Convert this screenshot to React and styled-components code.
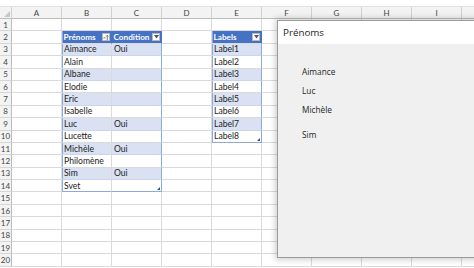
import React from 'react'
import styled, { createGlobalStyle } from 'styled-components'

const Global = createGlobalStyle`
  html, body { margin: 0; padding: 0; background: #fff; overflow: hidden; }
  body { font-family: Lato, "Liberation Sans", sans-serif; }
`

const COLS = ['A', 'B', 'C', 'D', 'E', 'F', 'G', 'H', 'I', '']
const ROW_H = 12.4

// table contents, row index (1-based) -> cells
const prenoms = ['Aimance', 'Alain', 'Albane', 'Elodie', 'Eric', 'Isabelle', 'Luc', 'Lucette', 'Michèle', 'Philomène', 'Sim', 'Svet']
const oui = { Aimance: 1, Luc: 1, 'Michèle': 1, Sim: 1 }

const Page = styled.div`
  width: 474px;
  height: 268px;
  position: relative;
  overflow: hidden;
`

const TopBand = styled.div`
  height: 7px;
  background: #fff;
  border-bottom: 1px solid #e2e2e2;
  box-sizing: border-box;
`

const Sheet = styled.div`
  display: grid;
  grid-template-columns: 12px repeat(10, 50px);
  grid-template-rows: 12px repeat(20, ${ROW_H}px);
`

const ColHead = styled.div`
  background: #f3f3f3;
  border-right: 1px solid #d0d0d0;
  border-bottom: 1px solid #bdbdbd;
  box-sizing: border-box;
  font-size: 8px;
  color: #444;
  display: flex;
  align-items: center;
  justify-content: center;
`

const Corner = styled(ColHead)`
  position: relative;
  &::after {
    content: '';
    position: absolute;
    right: 1px;
    bottom: 1px;
    border-left: 6px solid transparent;
    border-bottom: 6px solid #c8c8c8;
  }
`

const RowHead = styled.div`
  background: #f3f3f3;
  border-right: 1px solid #bdbdbd;
  border-bottom: 1px solid #d6d6d6;
  box-sizing: border-box;
  font-size: 8px;
  color: #444;
  display: flex;
  align-items: center;
  justify-content: center;
  overflow: hidden;
  white-space: nowrap;
`

const Cell = styled.div`
  position: relative;
  box-sizing: border-box;
  border-right: 1px solid ${p => (p.$kind === 'head' ? '#4472c4' : '#dadada')};
  border-bottom: 1px solid ${p => (p.$kind === 'band' ? '#c9d5ec' : p.$last ? '#8ea9db' : '#dadada')};
  background: ${p => (p.$kind === 'head' ? '#4472c4' : p.$kind === 'band' ? '#d9e1f2' : '#fff')};
  color: ${p => (p.$kind === 'head' ? '#fff' : '#222')};
  font-weight: ${p => (p.$kind === 'head' ? 700 : 400)};
  font-size: ${p => (p.$kind === 'head' ? 8.2 : 8.6)}px;
  padding-left: ${p => (p.$kind === 'head' ? 1.5 : 2)}px;
  display: flex;
  align-items: center;
  white-space: nowrap;
  ${p => p.$edge && 'border-right-color: #8ea9db;'}
  ${p => p.$left && 'box-shadow: inset 1px 0 0 #8ea9db;'}
`

const FilterBtn = styled.span`
  position: absolute;
  right: 1px;
  top: 2px;
  width: 8px;
  height: 8px;
  background: #fff;
  border: 1px solid #b9b9b9;
  box-sizing: border-box;
  display: flex;
  align-items: center;
  justify-content: center;
`

const Handle = styled.span`
  position: absolute;
  right: 1px;
  bottom: 1px;
  border-left: 3px solid transparent;
  border-bottom: 3px solid #2f4f8f;
`

const Dialog = styled.div`
  position: absolute;
  left: 277px;
  top: 20px;
  width: 210px;
  height: 236px;
  background: #f0f0f0;
  border: 1px solid #9a9a9a;
  box-shadow: 0 0 6px 2px rgba(0, 0, 0, 0.18);
  display: flex;
  flex-direction: column;
  font-family: "Open Sans", "Noto Sans", sans-serif;
  color: #1e1e1e;
`

const TitleBar = styled.div`
  height: 23px;
  background: #fff;
  padding-left: 5px;
  font-size: 9.8px;
  display: flex;
  align-items: center;
`

const Options = styled.div`
  display: flex;
  flex-direction: column;
  padding: 22px 0 0 24px;
`

const Option = styled.div`
  font-size: 8.3px;
  height: ${p => p.$gap}px;
  line-height: 12px;
`

const Arrow = () => (
  <svg width="5" height="4" viewBox="0 0 5 4">
    <path d="M0 0H5L2.5 3.5Z" fill="#555" />
  </svg>
)

const SortArrow = () => (
  <svg width="7" height="7" viewBox="0 0 7 7">
    <path d="M0.5 4H3" stroke="#555" strokeWidth="0.9" />
    <path d="M5 1V6.5M3.8 2.4L5 1L6.2 2.4" stroke="#555" strokeWidth="0.9" fill="none" />
  </svg>
)

function cellFor(row, col) {
  // col index: 0=A ... 9=J
  if (col === 1 || col === 2) {
    if (row === 2) {
      return (
        <Cell $kind="head" $left={col === 1}>
          {col === 1 ? 'Prénoms' : 'Condition'}
          <FilterBtn>{col === 1 ? <SortArrow /> : <Arrow />}</FilterBtn>
        </Cell>
      )
    }
    if (row >= 3 && row <= 14) {
      const name = prenoms[row - 3]
      const kind = row % 2 === 1 ? 'band' : 'plain'
      return (
        <Cell $kind={kind} $last={row === 14} $edge={col === 2} $left={col === 1}>
          {col === 1 ? name : oui[name] ? 'Oui' : ''}
          {col === 2 && row === 14 && <Handle />}
        </Cell>
      )
    }
  }
  if (col === 4) {
    if (row === 2) {
      return (
        <Cell $kind="head" $left>
          Labels
          <FilterBtn><Arrow /></FilterBtn>
        </Cell>
      )
    }
    if (row >= 3 && row <= 10) {
      const kind = row % 2 === 1 ? 'band' : 'plain'
      return (
        <Cell $kind={kind} $last={row === 10} $edge $left>
          {'Label' + (row - 2)}
          {row === 10 && <Handle />}
        </Cell>
      )
    }
  }
  return <Cell $kind="plain" />
}

export default function App() {
  const rows = Array.from({ length: 20 }, (_, i) => i + 1)
  return (
    <Page>
      <Global />
      <TopBand />
      <Sheet>
        <Corner />
        {COLS.map((c, i) => <ColHead key={i}>{c}</ColHead>)}
        {rows.map(r => (
          <React.Fragment key={r}>
            <RowHead>{r}</RowHead>
            {COLS.map((c, ci) => (
              <React.Fragment key={ci}>{cellFor(r, ci)}</React.Fragment>
            ))}
          </React.Fragment>
        ))}
      </Sheet>
      <Dialog>
        <TitleBar>Prénoms</TitleBar>
        <Options>
          <Option $gap={19}>Aimance</Option>
          <Option $gap={18.5}>Luc</Option>
          <Option $gap={25}>Michèle</Option>
          <Option $gap={14}>Sim</Option>
        </Options>
      </Dialog>
    </Page>
  )
}
